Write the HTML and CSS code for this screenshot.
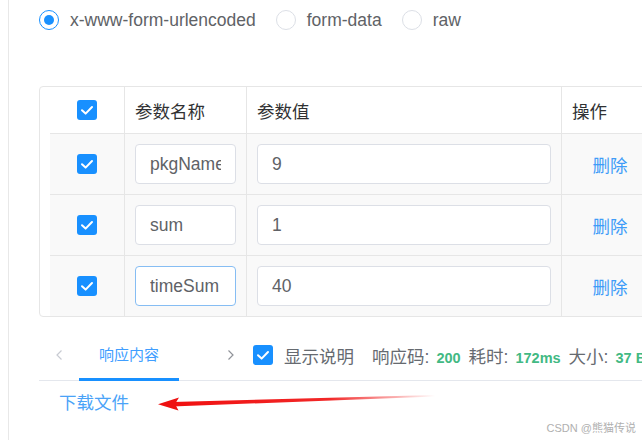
FILE: index.html
```html
<!DOCTYPE html>
<html lang="zh">
<head>
<meta charset="utf-8">
<title>请求参数</title>
<link rel="stylesheet" href="styles.css">
</head>
<body>
<div class="page">
  <div class="radios">
    <label class="radio on"><span class="circle"></span><span>x-www-form-urlencoded</span></label>
    <label class="radio"><span class="circle"></span><span>form-data</span></label>
    <label class="radio"><span class="circle"></span><span>raw</span></label>
  </div>

  <div class="table">
    <div class="row head">
      <div class="cell c1"><span class="cb"><svg viewBox="0 0 20 20" width="20" height="20"><path d="M5 10.2 L8.6 13.6 L15 7" fill="none" stroke="#fff" stroke-width="2" stroke-linecap="round" stroke-linejoin="round"/></svg></span></div>
      <div class="cell">参数名称</div>
      <div class="cell">参数值</div>
      <div class="cell">操作</div>
    </div>
    <div class="row body">
      <div class="cell c1"><span class="cb"><svg viewBox="0 0 20 20" width="20" height="20"><path d="M5 10.2 L8.6 13.6 L15 7" fill="none" stroke="#fff" stroke-width="2" stroke-linecap="round" stroke-linejoin="round"/></svg></span></div>
      <div class="cell"><input class="input" type="text" value="pkgName"></div>
      <div class="cell"><input class="input" type="text" value="9"></div>
      <div class="cell ops">删除</div>
    </div>
    <div class="row body">
      <div class="cell c1"><span class="cb"><svg viewBox="0 0 20 20" width="20" height="20"><path d="M5 10.2 L8.6 13.6 L15 7" fill="none" stroke="#fff" stroke-width="2" stroke-linecap="round" stroke-linejoin="round"/></svg></span></div>
      <div class="cell"><input class="input" type="text" value="sum"></div>
      <div class="cell"><input class="input" type="text" value="1"></div>
      <div class="cell ops">删除</div>
    </div>
    <div class="row body">
      <div class="cell c1"><span class="cb"><svg viewBox="0 0 20 20" width="20" height="20"><path d="M5 10.2 L8.6 13.6 L15 7" fill="none" stroke="#fff" stroke-width="2" stroke-linecap="round" stroke-linejoin="round"/></svg></span></div>
      <div class="cell"><input class="input focus" type="text" value="timeSum"></div>
      <div class="cell"><input class="input" type="text" value="40"></div>
      <div class="cell ops">删除</div>
    </div>
  </div>

  <div class="resbar">
    <div class="tabs">
      <span class="nav prev"><svg viewBox="0 0 8 12" width="8" height="12"><path d="M6.5 1.5 L2 6 L6.5 10.5" fill="none" stroke="#c8cbd2" stroke-width="1.2"/></svg></span>
      <span class="tab">响应内容</span>
      <span class="spacer"></span>
      <span class="nav next"><svg viewBox="0 0 8 12" width="8" height="12"><path d="M1.5 1.5 L6 6 L1.5 10.5" fill="none" stroke="#909399" stroke-width="1.2"/></svg></span>
    </div>
    <span class="cb"><svg viewBox="0 0 20 20" width="20" height="20"><path d="M5 10.2 L8.6 13.6 L15 7" fill="none" stroke="#fff" stroke-width="2" stroke-linecap="round" stroke-linejoin="round"/></svg></span>
    <span class="show">显示说明</span>
    <span class="stats">
      <span class="stat">响应码:<b>200</b></span><span class="stat">耗时:<b>172ms</b></span><span class="stat">大小:<b>37 B</b></span>
    </span>
  </div>

  <div class="download">下载文件</div>

  <svg class="arrow" viewBox="0 0 290 25" width="290" height="25">
    <defs>
      <linearGradient id="fade" x1="0" y1="0" x2="1" y2="0">
        <stop offset="0" stop-color="#f01010" stop-opacity="1"/>
        <stop offset="0.6" stop-color="#f01010" stop-opacity="0.9"/>
        <stop offset="1" stop-color="#f01010" stop-opacity="0"/>
      </linearGradient>
    </defs>
    <polygon points="22,12 285,5 285,6.6 22,16.5" fill="url(#fade)"/>
    <polygon points="8,14.2 29,7.6 25,14 28.5,20.6" fill="#ee1111"/>
  </svg>

  <div class="watermark">CSDN @熊猫传说</div>
</div>
</body>
</html>
```

FILE: styles.css
```css
body {
  margin: 0;
  overflow: hidden;
  background: #fff;
  font-family: "Liberation Sans", "Noto Sans CJK SC", sans-serif;
}

.page {
  position: relative;
  margin-left: 8px;
  height: 440px;
  box-sizing: border-box;
  border-left: 1px solid #e8e8e8;
  padding-left: 30px;
}

/* radios */
.radios {
  display: flex;
  align-items: center;
  height: 20px;
  padding-top: 10px;
  font-size: 17.5px;
  color: #606266;
  white-space: nowrap;
}
.radio {
  display: flex;
  align-items: center;
  margin-right: 20px;
}
.circle {
  width: 20px;
  height: 20px;
  box-sizing: border-box;
  border: 1px solid #dcdfe6;
  border-radius: 50%;
  margin-right: 11px;
  display: flex;
  align-items: center;
  justify-content: center;
  background: #fff;
}
.radio.on .circle {
  border-color: #1890ff;
}
.radio.on .circle::after {
  content: "";
  width: 10px;
  height: 10px;
  border-radius: 50%;
  background: #1890ff;
}

/* table */
.table {
  margin-top: 56px;
  width: max-content;
  border: 1px solid #e6e6e6;
  border-radius: 4px;
  padding-left: 10px;
}
.row {
  display: grid;
  grid-template-columns: 74px 122px 315px 97px;
}
.row + .row {
  border-top: 1px solid #e6e6e6;
}
.head {
  height: 46px;
  font-size: 17.5px;
  color: #303133;
}
.body {
  height: 60px;
  background: #f9f9f9;
}
.cell {
  display: flex;
  align-items: center;
  padding: 0 10px;
  box-sizing: border-box;
  min-width: 0;
}
.cell + .cell {
  border-left: 1px solid #e6e6e6;
}
.c1 {
  justify-content: center;
  padding: 0;
}
.ops {
  justify-content: center;
  color: #3f9cf8;
  font-size: 17.5px;
}
.input {
  width: 100%;
  height: 40px;
  box-sizing: border-box;
  border: 1px solid #dcdfe6;
  border-radius: 4px;
  background: #fff;
  padding: 0 14px;
  margin: 0;
  font-family: "Liberation Sans", "Noto Sans CJK SC", sans-serif;
  font-size: 17.5px;
  color: #606266;
  outline: none;
}
.input.focus {
  border-color: #86bdf3;
}

/* checkbox */
.cb {
  width: 20px;
  height: 20px;
  border-radius: 3px;
  background: #1890ff;
  display: inline-flex;
  align-items: center;
  justify-content: center;
  flex-shrink: 0;
}
.cb svg {
  display: block;
}

/* response bar */
.resbar {
  margin-top: 13px;
  height: 50px;
  display: flex;
  align-items: center;
  border-bottom: 1px solid #e4e7ed;
  white-space: nowrap;
}
.tabs {
  display: flex;
  align-self: stretch;
}
.nav {
  width: 40px;
  display: flex;
  align-items: center;
  justify-content: center;
}
.nav svg {
  display: block;
}
.spacer {
  width: 32px;
}
.tab {
  position: relative;
  width: 100px;
  text-align: center;
  line-height: 50px;
  font-size: 15px;
  color: #409eff;
}
.tab::after {
  content: "";
  position: absolute;
  left: 0;
  right: 0;
  bottom: -1px;
  height: 3px;
  background: #1890ff;
}
.resbar > .cb {
  margin-left: 2px;
}
.show {
  margin-left: 11px;
  font-size: 17.5px;
  color: #666a70;
}
.stats {
  display: flex;
  align-items: center;
  margin-left: 18px;
  font-size: 17.5px;
  color: #666a70;
  flex-shrink: 0;
}
.stat b {
  color: #42b983;
  font-size: 14.5px;
  font-weight: bold;
  margin: 0 8px 0 7px;
}

/* download */
.download {
  margin-top: 10px;
  padding-left: 20px;
  line-height: 24px;
  font-size: 17.5px;
  color: #4aa3f8;
}

/* annotation overlays */
.arrow {
  position: absolute;
  left: 141px;
  top: 390px;
}
.watermark {
  position: absolute;
  right: 6px;
  top: 420px;
  font-size: 11px;
  line-height: 16px;
  color: #b0b0b0;
  text-shadow: 0 0 1px #fff;
}
```
